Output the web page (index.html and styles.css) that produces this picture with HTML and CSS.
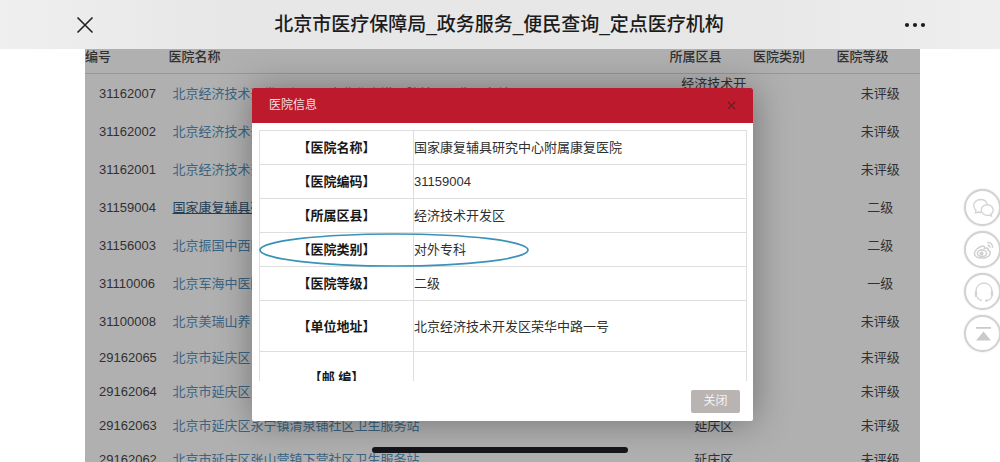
FILE: index.html
```html
<!DOCTYPE html>
<html lang="zh-CN">
<head>
<meta charset="utf-8">
<meta name="viewport" content="width=device-width, initial-scale=1">
<title>北京市医疗保障局_政务服务_便民查询_定点医疗机构</title>
<link rel="stylesheet" href="styles.css">
</head>
<body>
<div class="app">
  <header class="topbar">
    <button class="topbar-button" type="button" aria-label="返回">
      <svg width="18" height="18" viewBox="0 0 18 18" fill="none" stroke="#222" stroke-width="1.6"><path d="M1.5 1.5l15 15M16.5 1.5l-15 15"/></svg>
    </button>
    <h1 class="topbar-title">北京市医疗保障局_政务服务_便民查询_定点医疗机构</h1>
    <button class="topbar-button topbar-more" type="button" aria-label="更多">
      <svg width="22" height="6" viewBox="0 0 22 6" fill="#1c1c1c"><circle cx="3" cy="3" r="2.1"/><circle cx="11" cy="3" r="2.1"/><circle cx="19" cy="3" r="2.1"/></svg>
    </button>
  </header>

  <main class="content">
    <table class="list">
      <thead>
        <tr><th class="col-code">编号</th><th class="col-name">医院名称</th><th class="col-area">所属区县</th><th class="col-kind">医院类别</th><th class="col-level">医院等级</th></tr>
      </thead>
      <tbody>
        <tr class="tall"><td>31162007</td><td><a href="#">北京经济技术开发区经开工企业北小港医院社区卫生服务站</a></td><td>经济技术开发区</td><td></td><td>未评级</td></tr>
        <tr class="tall"><td>31162002</td><td><a href="#">北京经济技术开发区</a></td><td>经济技术开发区</td><td></td><td>未评级</td></tr>
        <tr class="tall"><td>31162001</td><td><a href="#">北京经济技术开发区</a></td><td>经济技术开发区</td><td></td><td>未评级</td></tr>
        <tr class="tall"><td>31159004</td><td><a class="current" href="#">国家康复辅具研究中心附属康复医院</a></td><td>经济技术开发区</td><td></td><td>二级</td></tr>
        <tr class="tall"><td>31156003</td><td><a href="#">北京振国中西医</a></td><td>经济技术开发区</td><td></td><td>二级</td></tr>
        <tr class="tall"><td>31110006</td><td><a href="#">北京军海中医院</a></td><td>经济技术开发区</td><td></td><td>一级</td></tr>
        <tr class="tall"><td>31100008</td><td><a href="#">北京美瑞山养</a></td><td>经济技术开发区</td><td></td><td>未评级</td></tr>
        <tr><td>29162065</td><td><a href="#">北京市延庆区</a></td><td>延庆区</td><td></td><td>未评级</td></tr>
        <tr><td>29162064</td><td><a href="#">北京市延庆区</a></td><td>延庆区</td><td></td><td>未评级</td></tr>
        <tr><td>29162063</td><td><a href="#">北京市延庆区永宁镇清泉铺社区卫生服务站</a></td><td>延庆区</td><td></td><td>未评级</td></tr>
        <tr><td>29162062</td><td><a href="#">北京市延庆区张山营镇下营社区卫生服务站</a></td><td>延庆区</td><td></td><td>未评级</td></tr>
      </tbody>
    </table>

    <section class="dialog" role="dialog" aria-labelledby="dialog-title">
      <header class="dialog-head">
        <h2 class="dialog-title" id="dialog-title">医院信息</h2>
        <button class="dialog-x" type="button" aria-label="关闭窗口">
          <svg width="9" height="9" viewBox="0 0 9 9" fill="none" stroke="#741521" stroke-width="1.2"><path d="M.8.8l7.400 7.400M8.200.8L.8 8.200"/></svg>
        </button>
      </header>
      <div class="dialog-body">
        <table class="detail">
          <tbody>
            <tr><th scope="row">【医院名称】</th><td>国家康复辅具研究中心附属康复医院</td></tr>
            <tr><th scope="row">【医院编码】</th><td>31159004</td></tr>
            <tr><th scope="row">【所属区县】</th><td>经济技术开发区</td></tr>
            <tr><th scope="row">【医院类别】</th><td>对外专科</td></tr>
            <tr><th scope="row">【医院等级】</th><td>二级</td></tr>
            <tr class="tall"><th scope="row">【单位地址】</th><td>北京经济技术开发区荣华中路一号</td></tr>
            <tr class="tall"><th scope="row">【邮 编】</th><td></td></tr>
          </tbody>
        </table>
        <svg class="mark" viewBox="0 0 270 34" fill="none" stroke="#3a92b8" stroke-width="1.7"><ellipse cx="135" cy="17" rx="134" ry="16"/></svg>
      </div>
      <footer class="dialog-foot"><button class="close" type="button">关闭</button></footer>
    </section>
  </main>

  <nav class="tools" aria-label="快捷工具">
    <button class="tool" type="button" aria-label="微信">
      <svg width="24" height="24" viewBox="0 0 24 24" fill="none" stroke="#d4d4d4" stroke-width="1.4"><path d="M10 16.500c-1 0-1.900-.2-2.700-.5L4.500 17l.3-2.800C3.500 13 2.700 11.500 2.700 9.600 2.700 6 5.800 3.500 9.500 3.500c3.300 0 6 2 6.600 4.700"/><path d="M16.200 8.700c3.400 0 6 2.400 6 5.300 0 1.700-.8 3.100-2.100 4.100l.4 2-2.200-1c-.7.200-1.400.3-2.100.3-3.400 0-6-2.400-6-5.400s2.600-5.300 6-5.300z"/></svg>
    </button>
    <button class="tool" type="button" aria-label="微博">
      <svg width="24" height="24" viewBox="0 0 24 24" fill="none" stroke="#d0d0d0" stroke-width="1.5"><path d="M17 12c.5-1.800-.6-2.700-3.600-1.500.5-1.800-.2-2.900-2.500-2.300C7.500 9 3.500 12.500 3.500 15.500S7 20 11.200 20c4.600 0 8-2.200 8-4.900 0-1.600-.9-2.600-2.200-3.100z"/><ellipse cx="11" cy="15.300" rx="4.600" ry="3.200"/><circle cx="10.500" cy="15.500" r="1.300" fill="#d0d0d0"/><path d="M16.200 4.500c3.200-.6 5.900 2 5.300 5.300M16.500 7.400c1.500-.3 2.700.9 2.400 2.300"/></svg>
    </button>
    <button class="tool" type="button" aria-label="客服">
      <svg width="24" height="24" viewBox="0 0 24 24" fill="none" stroke="#d4d4d4"><path stroke-width="1.300" d="M5 11a8 8 0 0 1 16 0M21 16c-.5 2.600-2.500 4.200-5 4.500"/><path stroke-width="2.400" d="M5 11v6M21 11v5"/><path stroke-width="1.300" d="M6 17c1 2 2.600 3.300 5 3.500"/><path stroke-width="2" d="M14 20.500h3"/></svg>
    </button>
    <button class="tool" type="button" aria-label="回到顶部">
      <svg width="24" height="24" viewBox="0 0 24 24" fill="#cacaca"><path d="M5 5h15v1.800H5zM12.500 9.500l7.500 9H5z"/></svg>
    </button>
  </nav>
  <div class="home-bar"></div>
</div>
</body>
</html>
```
FILE: styles.css
```css
* { box-sizing: border-box; }

body {
  margin: 0;
  background: #fff;
  color: #303030;
  font: 13px/19px "Liberation Sans", "Noto Sans CJK SC", sans-serif;
}

button {
  padding: 0;
  border: 0;
  background: none;
  font: inherit;
  cursor: pointer;
}

svg { display: block; }

table {
  width: 100%;
  border-collapse: collapse;
  table-layout: fixed;
}

.app {
  position: relative;
  display: flex;
  flex-direction: column;
  height: 100vh;
  overflow: hidden;
}

.topbar {
  display: flex;
  align-items: center;
  justify-content: space-between;
  flex: none;
  height: 49px;
  padding: 0 7.4% 0 7.6%;
  background: linear-gradient(90deg, #efefef, #e7e7e7 22%, #e7e7e7 72%, #eee);
}

.topbar-title {
  margin: 0;
  color: #1c1c1c;
  font-size: 19px;
  font-weight: 500;
  line-height: 28px;
  white-space: nowrap;
}

.content {
  position: relative;
  flex: 1;
  width: 83.5%;
  min-height: 0;
  margin-left: 8.5%;
  background: #b0b0b0;
}

.list th {
  height: 24px;
  padding: 0 0 8px;
  border-bottom: 1px solid #979797;
  font-weight: 500;
  line-height: 16px;
  text-align: left;
}

.col-code, .col-kind { width: 10%; }
.col-name { width: 60%; }
.col-area { width: 10%; }
.col-level { width: 10%; }

.list td {
  height: 34px;
  padding: 0 4px;
}

.list .tall td { height: 38px; }
.list td:nth-child(1) { padding: 0 0 0 14px; }
.list td:nth-child(3) { padding: 0 5px 0 10px; }
.list td:nth-child(3), .list td:nth-child(5) { text-align: center; }
.list td:nth-child(5) { padding: 0 0 0 4px; }

.list a {
  color: #3a6483;
  text-decoration: none;
  white-space: nowrap;
}

.list a.current {
  color: #243f56;
  text-decoration: underline;
}

.dialog {
  position: absolute;
  top: 39px;
  left: 20%;
  width: 60%;
  border-radius: 2px;
  background: #fff;
  box-shadow: 1px 1px 36px rgba(0, 0, 0, .35);
}

.dialog-head {
  display: flex;
  align-items: center;
  justify-content: space-between;
  height: 35px;
  padding: 0 17px;
  border-radius: 2px 2px 0 0;
  background: #bd1b2d;
}

.dialog-title {
  margin: 0;
  color: #f6dfe1;
  font-size: 12px;
  font-weight: 400;
}

.dialog-body {
  position: relative;
  height: 258px;
  padding: 7px 6px 0 7px;
  overflow: hidden;
}

.detail th, .detail td {
  height: 34px;
  padding: 0;
  border: 1px solid #dedede;
}

.detail .tall th, .detail .tall td { height: 51px; }

.detail th {
  width: 154px;
  color: #181818;
  font-weight: 700;
}

.mark {
  position: absolute;
  top: 110px;
  left: 7px;
  width: 270px;
  height: 34px;
  pointer-events: none;
}

.dialog-foot {
  display: flex;
  justify-content: flex-end;
  padding: 9px 13px 8px;
}

.close {
  width: 49px;
  height: 23px;
  border-radius: 2px;
  background: #b9b3b2;
  color: #f5f3f3;
  font-size: 12px;
}

.tools {
  position: absolute;
  top: 189px;
  right: -1px;
  display: grid;
  gap: 5px;
}

.tool {
  display: grid;
  place-items: center;
  width: 37px;
  height: 37px;
  border: 2px solid #d2d2d2;
  border-radius: 50%;
  background: #fff;
  box-shadow: 0 0 2px #ddd;
}

.home-bar {
  position: absolute;
  bottom: 9px;
  left: 50%;
  width: 256px;
  height: 6px;
  border-radius: 3px;
  background: #14141a;
  transform: translateX(-50%);
}
```
